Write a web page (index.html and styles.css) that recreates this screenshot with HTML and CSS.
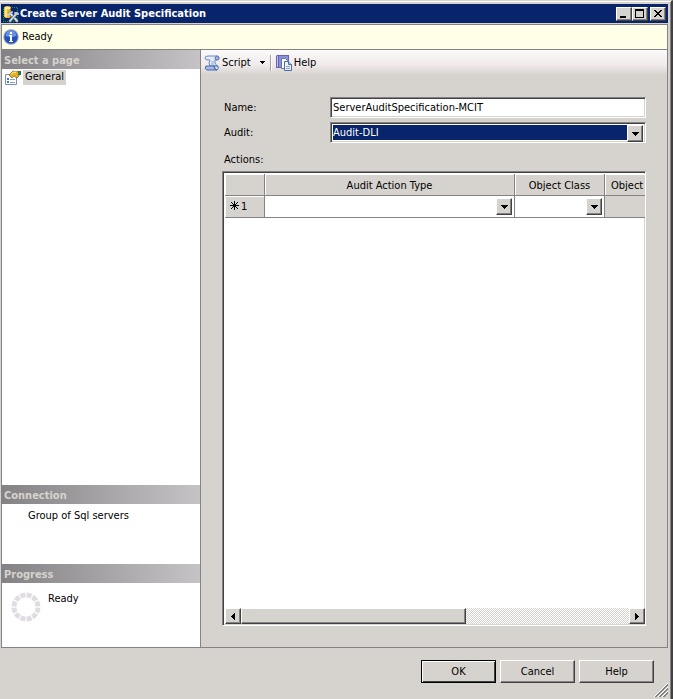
FILE: index.html
```html
<!DOCTYPE html>
<html lang="en">
<head>
<meta charset="utf-8">
<title>Create Server Audit Specification</title>
<link rel="stylesheet" href="styles.css">
</head>
<body>
<main class="window">
  <header class="titlebar">
    <svg class="app-icon" viewBox="0 0 16 18" aria-hidden="true">
      <rect x=".5" y="2.5" width="14" height="14" fill="none" stroke="#1c9c2c" stroke-dasharray="1 1" shape-rendering="crispEdges"/>
      <path d="M1 3q0-2 3.500-2t3.500 2v8q0 2-3.500 2T1 11z" fill="#f0b828"/><path d="M2 3h2v9H2z" fill="#ffe88a"/><path d="M7 3h1v9H7z" fill="#b87808"/><ellipse cx="4.500" cy="3" rx="3" ry="1.300" fill="#fff2b0"/>
      <g fill="none" stroke-linecap="round"><path d="M7 8l7 8" stroke="#66788c" stroke-width="3"/><path d="M7 8l7 8" stroke="#e8eef4" stroke-width="1.600"/><path d="M14 8l-7 8" stroke="#66788c" stroke-width="3"/><path d="M14 8l-7 8" stroke="#d2dce6" stroke-width="1.600"/><path d="M5 10l4-3M12 8l3 1" stroke="#c0ccd8" stroke-width="2"/></g>
    </svg>
    <h1 class="title">Create Server Audit Specification</h1>
    <div class="window-buttons">
      <button class="raised win-button" aria-label="Minimize"><svg viewBox="0 0 12 10" shape-rendering="crispEdges"><path d="M2 7h6v2H2z"/></svg></button>
      <button class="raised win-button" aria-label="Maximize"><svg viewBox="0 0 12 10" shape-rendering="crispEdges"><path d="M1 0h9v9H1zM2 2v6h7V2z" fill-rule="evenodd"/></svg></button>
      <button class="raised win-button win-close" aria-label="Close"><svg viewBox="0 0 12 10" shape-rendering="crispEdges"><path d="M2 1h2v1h1v1h2V2h1V1h2v1H9v1H8v1H7v1h1v1h1v1h1v1H8V7H7V6H5v1H4v1H2V7h1V6h1V5h1V4H4V3H3V2H2z"/></svg></button>
    </div>
  </header>
  <div class="status">
    <svg class="icon" viewBox="0 0 16 16" aria-hidden="true"><circle cx="8" cy="8" r="7.700" fill="#8c9cc8"/><circle cx="8" cy="8" r="6.600" fill="#2450b8"/><path d="M2.500 7a5.500 5.500 0 0 1 11 0q-5.500 2-11 0" fill="#6a92e4"/><path d="M7 3h2v2H7zM6 6h3v6h1v1H6v-1h1V7H6z" fill="#fff"/></svg>
    <span>Ready</span>
  </div>
  <div class="body">
    <aside class="sidebar">
      <h2 class="bar">Select a page</h2>
      <nav class="pages">
        <a class="page" href="#general">
          <svg class="icon" viewBox="0 0 16 16" aria-hidden="true"><path d="M.5 4.500h11v10H.5z" fill="#fff" stroke="#7890b8"/><path d="M2 8h2v2H2zM2 11h2v2H2z" fill="#4a78c8"/><path d="M5 9.500h5M5 12.500h5" stroke="#8ca0c0"/><path d="M4 5l4-4 3 1 2-1 1 1v4l-2 2-3-2-2 2z" fill="#e6b020" stroke="#7c5a10" stroke-width=".7"/><path d="M6 4l3-2 2 1" stroke="#fff09a" fill="none"/><path d="M13 1h3v4h-3z" fill="#287848"/></svg>
          <span class="page-name">General</span>
        </a>
      </nav>
      <h2 class="bar">Connection</h2>
      <div class="connection">Group of Sql servers</div>
      <h2 class="bar">Progress</h2>
      <div class="progress">
        <svg class="spinner" viewBox="0 0 30 30" aria-hidden="true"><circle cx="15" cy="15" r="12" fill="none" stroke="#e0dce2" stroke-width="5" pathLength="120" stroke-dasharray="8 2" stroke-dashoffset="-1"/></svg>
        <span>Ready</span>
      </div>
    </aside>
    <section class="content" id="general">
      <div class="toolbar">
        <button class="tool"><svg class="icon" viewBox="0 0 16 16" aria-hidden="true"><path d="M4 1h9q2 0 2 2t-2 2h-2q-1 3 2 6H6Q4 8 6 5H4Q1 5 1 3t3-2z" fill="#e4ecfc" stroke="#6c88c4"/><path d="M13 5q2 0 2-2t-2-2q-2 0-2 3z" fill="#a4b8e4" stroke="#5874b4"/><path d="M2 11h8q0 4 3 4H3q-3-1-1-4z" fill="#a8bce8" stroke="#4763a8"/><path d="M10 11h4q1 3-1 4-2 0-3-4" fill="#dce6fa" stroke="#4763a8"/><path d="M7 7h3M7 9h3" stroke="#8ca8dc"/></svg><span>Script</span><svg class="caret" viewBox="0 0 5 3" shape-rendering="crispEdges" aria-hidden="true"><path d="M0 0h5v1H4v1H3v1H2V2H1V1H0z"/></svg></button>
        <span class="separator"></span>
        <button class="tool"><svg class="icon" viewBox="0 0 16 16" aria-hidden="true"><path d="M0 1l1-1h12v13H0z" fill="#6464b4"/><path d="M3 1h9v11H3z" fill="#8c90d4"/><path d="M1.500 1v11" stroke="#c0c4ec"/><path d="M5.500 3.500h4l2 2v8h-6z" fill="#fff" stroke="#5a78ac"/><path d="M8.500 6.500h4l3 3v6h-7z" fill="#eef4ff" stroke="#4a6cac"/><path d="M12.500 6.500v3h3" fill="#b8cce8" stroke="#4a6cac"/><path d="M10 11.500h4M10 13.500h4" stroke="#86a0cc"/></svg><span>Help</span></button>
      </div>
      <form class="form">
        <label for="name">Name:</label>
        <input class="sunken text" id="name" type="text" value="ServerAuditSpecification-MCIT">
        <label for="audit">Audit:</label>
        <div class="sunken combo">
          <select id="audit"><option>Audit-DLI</option></select>
          <span class="raised drop"><svg class="arrow" viewBox="0 0 7 4" shape-rendering="crispEdges" aria-hidden="true"><path d="M0 0h7v1H6v1H5v1H4v1H3V3H2V2H1V1H0z"/></svg></span>
        </div>
        <span class="actions-label">Actions:</span>
      </form>
      <div class="sunken grid-box">
        <div class="grid-scroll">
          <table class="grid">
            <colgroup><col class="c-row"><col class="c-type"><col class="c-class"><col class="c-object"></colgroup>
            <thead><tr><th></th><th>Audit Action Type</th><th>Object Class</th><th class="last">Object</th></tr></thead>
            <tbody><tr>
              <th class="row-head"><svg class="star" viewBox="0 0 9 9" shape-rendering="crispEdges" aria-hidden="true"><path d="M4 0h1v9H4zM0 4h9v1H0zM1 1h1v1H1zM2 2h1v1H2zM3 3h3v3H3zM6 2h1v1H6zM7 1h1v1H7zM2 6h1v1H2zM1 7h1v1H1zM6 6h1v1H6zM7 7h1v1H7z"/></svg>1</th>
              <td><button class="raised drop cell-drop" aria-label="Audit Action Type"><svg class="arrow" viewBox="0 0 7 4" shape-rendering="crispEdges"><path d="M0 0h7v1H6v1H5v1H4v1H3V3H2V2H1V1H0z"/></svg></button></td>
              <td><button class="raised drop cell-drop" aria-label="Object Class"><svg class="arrow" viewBox="0 0 7 4" shape-rendering="crispEdges"><path d="M0 0h7v1H6v1H5v1H4v1H3V3H2V2H1V1H0z"/></svg></button></td>
              <td class="disabled"></td>
            </tr></tbody>
          </table>
        </div>
        <div class="scrollbar">
          <button class="raised scroll-button" aria-label="Scroll left"><svg class="side-arrow" viewBox="0 0 4 7" shape-rendering="crispEdges"><path d="M4 0v7H3V6H2V5H1V4H0V3h1V2h1V1h1V0z"/></svg></button>
          <div class="track"><div class="raised thumb"></div></div>
          <button class="raised scroll-button" aria-label="Scroll right"><svg class="side-arrow" viewBox="0 0 4 7" shape-rendering="crispEdges"><path d="M0 0v7h1V6h1V5h1V4h1V3H3V2H2V1H1V0z"/></svg></button>
        </div>
      </div>
    </section>
  </div>
  <footer class="footer">
    <button class="raised action default">OK</button>
    <button class="raised action">Cancel</button>
    <button class="raised action">Help</button>
    <svg class="grip" viewBox="0 0 14 14" aria-hidden="true"><path d="M0 14L14 0M4 14L14 4M8 14l6-6" stroke="#fff"/><path d="M1 14L14 1M2 14L14 2M5 14l9-9M6 14l8-8M9 14l5-5M10 14l4-4" stroke="#808080"/></svg>
  </footer>
</main>
</body>
</html>
```
FILE: styles.css
```css
* { box-sizing: border-box; }
body { margin: 0; font: 11px/14px "DejaVu Sans Condensed", "DejaVu Sans", sans-serif; color: #000; }
button, input, select { font: inherit; color: inherit; margin: 0; padding: 0; border: 0; border-radius: 0; background: none; }
h1, h2 { margin: 0; font-size: 11px; line-height: 14px; }
svg { display: block; flex: none; }
.icon { width: 16px; height: 16px; }
.window { height: 100vh; display: flex; flex-direction: column; background: #d6d3ce; border-top: 1px solid #d6d3ce; border-right: 2px solid #424142; padding: 2px 3px 0 1px; box-shadow: inset 0 1px #fff, inset -1px 0 #848284; }
.raised { background: #d6d3ce; border: 1px solid; border-color: #fff #424142 #424142 #fff; box-shadow: inset -1px -1px #848284; }
.sunken { background: #fff; border: 1px solid; border-color: #848284 #fff #fff #848284; box-shadow: inset 1px 1px #424142, inset -1px -1px #d6d3ce; }
.titlebar { height: 19px; margin-top: 1px; display: flex; align-items: center; background: #08246b; color: #fff; padding: 0 2px; flex: none; }
.app-icon { width: 16px; height: 18px; margin-right: 1px; }
.title { flex: 1; }
.window-buttons { display: flex; }
.win-button { width: 16px; height: 14px; display: flex; }
.win-button svg { width: 12px; height: 10px; margin: 1px; }
.win-close { margin-left: 2px; }
.status { height: 26px; flex: none; display: flex; align-items: center; gap: 3px; padding: 0 1px; margin-top: 1px; background: #ffffe7; border: 1px solid #848284; }
.body { flex: 1; min-height: 0; display: flex; border: solid #848284; border-width: 0 1px 1px; }
.sidebar { width: 199px; flex: none; display: flex; flex-direction: column; background: #fff; border-right: 1px solid #848284; }
.bar { height: 19px; padding: 4px 2px 0; background: linear-gradient(90deg, #848284, #c6c3c6); color: #d6d3ce; }
.pages { flex: 1; }
.page { display: flex; color: #000; text-decoration: none; padding: 1px 3px; gap: 2px; }
.page-name { background: #d6d3ce; padding: 0 2px; height: 15px; }
.connection { height: 60px; padding: 5px 26px; }
.progress { height: 64px; padding: 9px; display: flex; gap: 7px; }
.spinner { width: 30px; height: 30px; }
.content { flex: 1; min-width: 0; display: flex; flex-direction: column; }
.toolbar { height: 25px; display: flex; align-items: center; padding: 0 3px; background: linear-gradient(#fcfafa, #f0eaea 60%, #d6d3ce); }
.tool { display: flex; align-items: center; gap: 2px; }
.caret { width: 5px; height: 3px; margin-left: 7px; }
.separator { width: 2px; height: 16px; margin: 0 4px 0 5px; border-left: 1px solid #a5a2a5; border-right: 1px solid #fff; }
.form { display: grid; grid-template-columns: 106px 1fr; row-gap: 4px; align-items: center; padding: 22px 21px 0 23px; }
.text { height: 21px; width: 100%; padding: 0 2px; }
.combo { height: 21px; display: flex; padding: 2px; }
.combo select { flex: 1; appearance: none; background: #08246b; color: #fff; }
.drop { width: 16px; height: 17px; display: flex; align-items: center; justify-content: center; }
.arrow { width: 7px; height: 4px; }
.side-arrow { width: 4px; height: 7px; }
.actions-label { padding-top: 6px; }
.grid-box { flex: 1; min-height: 0; margin: 4px 21px 21px; padding: 2px 0 1px 2px; display: flex; flex-direction: column; }
.grid-scroll { flex: 1; overflow: hidden; }
.grid { width: 520px; table-layout: fixed; border-collapse: separate; border-spacing: 0; }
.c-row { width: 40px; } .c-type { width: 250px; } .c-class { width: 90px; } .c-object { width: 140px; }
.grid th, .grid td { height: 22px; padding: 0; font-weight: normal; border-right: 1px solid #848284; border-bottom: 1px solid #848284; }
.grid thead th { padding-top: 2px; }
.grid th { background: #d6d3ce; box-shadow: inset 1px 1px #fff; }
.grid .last { text-align: left; padding-left: 6px; }
.star { display: inline-block; width: 9px; height: 9px; margin-right: 2px; }
.grid .row-head { text-align: left; padding-left: 5px; }
.cell-drop { margin-left: auto; margin-right: 2px; }
.grid .disabled { background: #d6d3ce; }
.scrollbar { height: 16px; display: flex; }
.scroll-button { width: 16px; display: flex; align-items: center; justify-content: center; }
.track { flex: 1; background: repeating-conic-gradient(#fff 0 25%, #d6d3ce 0 50%) 0 0 / 2px 2px; }
.thumb { width: 58%; height: 100%; }
.footer { height: 51px; flex: none; position: relative; display: flex; justify-content: flex-end; gap: 4px; padding: 12px 14px; }
.action { width: 75px; height: 23px; }
.default { border-color: #000; box-shadow: inset 1px 1px #fff, inset -1px -1px #424142; }
.grip { position: absolute; right: 0; bottom: 2px; width: 14px; height: 14px; }
```
